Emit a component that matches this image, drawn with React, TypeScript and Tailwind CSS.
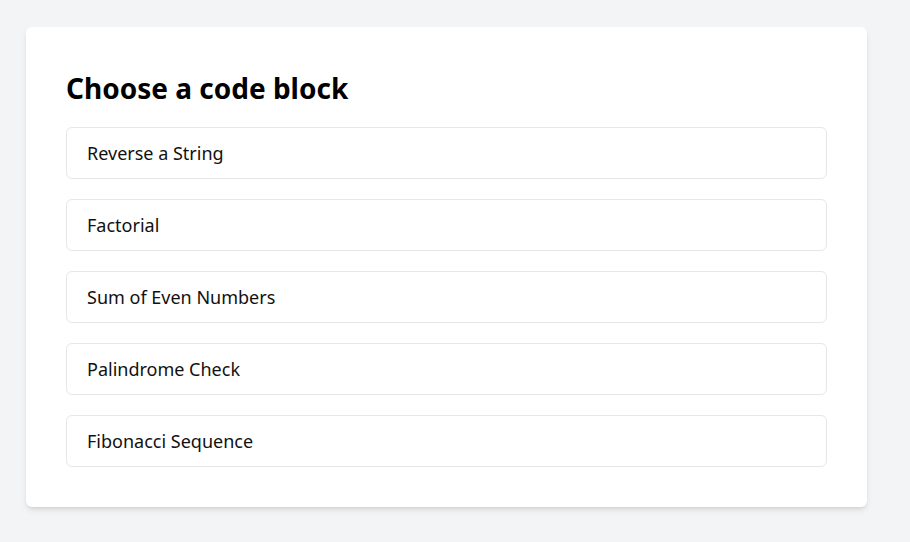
const blocks = [
  'Reverse a String',
  'Factorial',
  'Sum of Even Numbers',
  'Palindrome Check',
  'Fibonacci Sequence',
]

export default function App() {
  return (
    <div
      className="min-h-screen bg-[#f3f4f6] pt-[27px] pl-[26px]"
      style={{ fontFamily: '"Noto Sans", "Open Sans", sans-serif' }}
    >
      <div className="w-[841px] rounded-md bg-white px-10 pt-11 pb-10 shadow-md">
        <h1 className="mb-[22px] text-[28px] leading-[34px] font-bold text-black">
          Choose a code block
        </h1>
        <div className="flex flex-col gap-5">
          {blocks.map((b) => (
            <button
              key={b}
              className="flex h-[52px] items-center rounded-md border border-[#e5e7eb] bg-white px-5 text-left text-[18px] text-[#111]"
            >
              {b}
            </button>
          ))}
        </div>
      </div>
    </div>
  )
}
